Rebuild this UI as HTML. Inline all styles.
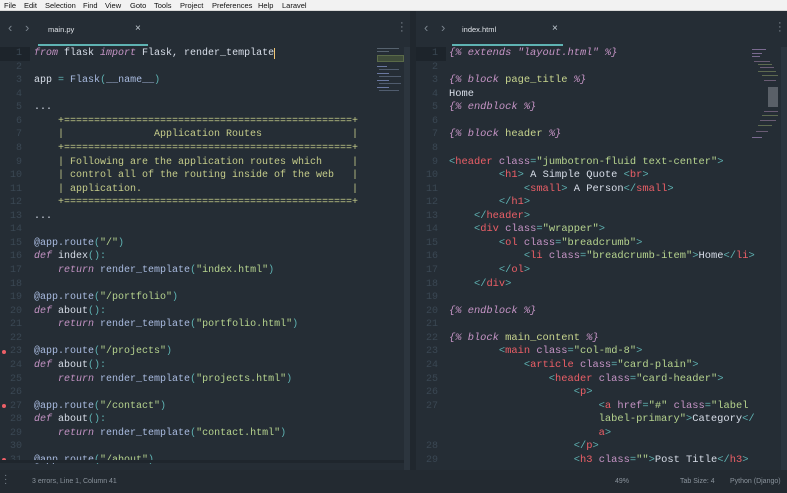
<!DOCTYPE html>
<html><head><meta charset="utf-8"><style>
*{margin:0;padding:0;box-sizing:border-box}
body{width:787px;height:493px;overflow:hidden;background:#252d35;font-family:"Liberation Sans",sans-serif;position:relative}
.menu{position:absolute;left:0;top:0;width:787px;height:11px;background:#f2f2f2;border-bottom:1px solid #d8d8d8;font-size:7.5px;color:#111}
.menu span{position:absolute;top:1px}
.pane{position:absolute;top:11px;bottom:23px;background:#252d35;overflow:hidden}
.tabbar{position:absolute;left:0;right:0;top:0;height:33px}
.tab{position:absolute;top:14px;font-size:7.5px;color:#dfe3e8}
.x{position:absolute;top:12px;font-size:10px;color:#c8d0d8}
.arr{position:absolute;top:9px;font-size:13px;color:#7a848e}
.dots{position:absolute;top:10px;font-size:11px;color:#8a939c;line-height:4px;width:3px}
.ul{position:absolute;top:33px;height:2px;background:#5fb3b3}
.code{position:absolute;top:36px;white-space:pre;line-height:13.57px}
.ln{position:absolute;top:36px;text-align:right;white-space:pre;line-height:13.57px;color:#3a4753}
.k{color:#c594c5;font-style:italic}.t{color:#ec5f67}.p{color:#5fb3b3}.s{color:#b6d38e}.a{color:#c594c5}
.d{color:#a9bbe0}.c{color:#c5cc8a}.w{color:#d8dee9}.j{color:#c594c5;font-style:italic}.g{color:#c9d68f}
.status{position:absolute;left:0;top:470px;width:787px;height:23px;background:#232a31;font-size:7px;color:#8a939c}
.status span{position:absolute;top:8px}
.dot{position:absolute;width:4px;height:4px;border-radius:2px;background:#ec5f67}
.m{position:absolute;height:1px}
</style></head><body>
<div class="menu">
<span style="left:4px">File</span><span style="left:24px">Edit</span><span style="left:45px">Selection</span><span style="left:83px">Find</span><span style="left:105px">View</span><span style="left:130px">Goto</span><span style="left:154px">Tools</span><span style="left:180px">Project</span><span style="left:212px">Preferences</span><span style="left:258px">Help</span><span style="left:282px">Laravel</span>
</div>

<div class="pane" style="left:0;width:410px">
<div class="tabbar"><span class="arr" style="left:8px">‹</span><span class="arr" style="left:25px">›</span><span class="tab" style="left:48px">main.py</span><span class="x" style="left:135px">×</span><span class="dots" style="left:400px">·<br>·<br>·</span></div>
<div class="ul" style="left:38px;width:110px"></div>
<div style="position:absolute;left:0;top:36px;width:30px;height:13.57px;background:#1d242b"></div>
<div class="ln" style="left:0;width:22px;font:10px 'Liberation Mono',monospace;line-height:13.57px">1
2
3
4
5
6
7
8
9
10
11
12
13
14
15
16
17
18
19
20
21
22
23
24
25
26
27
28
29
30
31</div>
<div class="code w" style="left:34px;font:10px 'Liberation Mono',monospace;line-height:13.57px"><span class="k">from</span> flask <span class="k">import</span> Flask, render_template<span style="border-left:1.5px solid #f0c674"></span>

app <span class="p">=</span> <span class="d">Flask</span><span class="p">(</span><span class="d">__name__</span><span class="p">)</span>

<span class="w">...</span>
<span class="c">    +================================================+
    |               Application Routes               |
    +================================================+
    | Following are the application routes which     |
    | control all of the routing inside of the web   |
    | application.                                   |
    +================================================+</span>
...

<span class="d">@app.route</span><span class="p">(</span><span class="s">"/"</span><span class="p">)</span>
<span class="k">def</span> index<span class="p">():</span>
    <span class="k">return</span> <span class="d">render_template</span><span class="p">(</span><span class="s">"index.html"</span><span class="p">)</span>

<span class="d">@app.route</span><span class="p">(</span><span class="s">"/portfolio"</span><span class="p">)</span>
<span class="k">def</span> about<span class="p">():</span>
    <span class="k">return</span> <span class="d">render_template</span><span class="p">(</span><span class="s">"portfolio.html"</span><span class="p">)</span>

<span class="d">@app.route</span><span class="p">(</span><span class="s">"/projects"</span><span class="p">)</span>
<span class="k">def</span> about<span class="p">():</span>
    <span class="k">return</span> <span class="d">render_template</span><span class="p">(</span><span class="s">"projects.html"</span><span class="p">)</span>

<span class="d">@app.route</span><span class="p">(</span><span class="s">"/contact"</span><span class="p">)</span>
<span class="k">def</span> about<span class="p">():</span>
    <span class="k">return</span> <span class="d">render_template</span><span class="p">(</span><span class="s">"contact.html"</span><span class="p">)</span>

<span class="d">@app.route</span><span class="p">(</span><span class="s">"/about"</span><span class="p">)</span></div>
<div class="dot" style="left:2px;top:339px"></div>
<div class="dot" style="left:2px;top:393px"></div>
<div class="dot" style="left:2px;top:447px"></div>
<div style="position:absolute;left:375px;top:35px;width:30px;height:45px">
<div class="m" style="left:2px;top:2px;width:22px;background:#56626e"></div>
<div class="m" style="left:2px;top:5px;width:12px;background:#56626e"></div>
<div style="position:absolute;left:2px;top:9px;width:27px;height:7px;background:#3f4c3a;border:1px solid #5a6a48"></div>
<div class="m" style="left:2px;top:20px;width:10px;background:#6a78a0"></div>
<div class="m" style="left:4px;top:23px;width:20px;background:#505c6e"></div>
<div class="m" style="left:2px;top:27px;width:12px;background:#6a78a0"></div>
<div class="m" style="left:4px;top:30px;width:22px;background:#505c6e"></div>
<div class="m" style="left:2px;top:34px;width:12px;background:#6a78a0"></div>
<div class="m" style="left:4px;top:37px;width:22px;background:#505c6e"></div>
<div class="m" style="left:2px;top:41px;width:12px;background:#6a78a0"></div>
<div class="m" style="left:4px;top:44px;width:20px;background:#505c6e"></div>
</div>
<div style="position:absolute;left:404px;top:36px;width:6px;bottom:0;background:#2c353e"></div>
<div style="position:absolute;left:0;top:449px;width:404px;height:3px;background:#1f262d"></div>
</div>

<div style="position:absolute;left:410px;top:11px;width:6px;bottom:23px;background:#20272e"></div>

<div class="pane" style="left:416px;width:371px">
<div class="tabbar"><span class="arr" style="left:8px">‹</span><span class="arr" style="left:25px">›</span><span class="tab" style="left:46px">index.html</span><span class="x" style="left:136px">×</span><span class="dots" style="left:362px">·<br>·<br>·</span></div>
<div class="ul" style="left:36px;width:111px"></div>
<div style="position:absolute;left:0;top:36px;width:30px;height:13.57px;background:#1d242b"></div>
<div class="ln" style="left:0;width:22px;font:10px 'Liberation Mono',monospace;line-height:13.57px">1
2
3
4
5
6
7
8
9
10
11
12
13
14
15
16
17
18
19
20
21
22
23
24
25
26
27


28
29</div>
<div class="code w" style="left:33px;font:10.4px 'Liberation Mono',monospace;line-height:13.57px"><span class="j">{% extends "layout.html" %}</span>

<span class="j">{% block</span> <span class="g">page_title</span> <span class="j">%}</span>
Home
<span class="j">{% endblock %}</span>

<span class="j">{% block</span> <span class="g">header</span> <span class="j">%}</span>

<span class="p">&lt;</span><span class="t">header</span> <span class="a">class</span><span class="p">=</span><span class="s">"jumbotron-fluid text-center"</span><span class="p">&gt;</span>
        <span class="p">&lt;</span><span class="t">h1</span><span class="p">&gt;</span> A Simple Quote <span class="p">&lt;</span><span class="t">br</span><span class="p">&gt;</span>
            <span class="p">&lt;</span><span class="t">small</span><span class="p">&gt;</span> A Person<span class="p">&lt;/</span><span class="t">small</span><span class="p">&gt;</span>
        <span class="p">&lt;/</span><span class="t">h1</span><span class="p">&gt;</span>
    <span class="p">&lt;/</span><span class="t">header</span><span class="p">&gt;</span>
    <span class="p">&lt;</span><span class="t">div</span> <span class="a">class</span><span class="p">=</span><span class="s">"wrapper"</span><span class="p">&gt;</span>
        <span class="p">&lt;</span><span class="t">ol</span> <span class="a">class</span><span class="p">=</span><span class="s">"breadcrumb"</span><span class="p">&gt;</span>
            <span class="p">&lt;</span><span class="t">li</span> <span class="a">class</span><span class="p">=</span><span class="s">"breadcrumb-item"</span><span class="p">&gt;</span>Home<span class="p">&lt;/</span><span class="t">li</span><span class="p">&gt;</span>
        <span class="p">&lt;/</span><span class="t">ol</span><span class="p">&gt;</span>
    <span class="p">&lt;/</span><span class="t">div</span><span class="p">&gt;</span>

<span class="j">{% endblock %}</span>

<span class="j">{% block</span> <span class="g">main_content</span> <span class="j">%}</span>
        <span class="p">&lt;</span><span class="t">main</span> <span class="a">class</span><span class="p">=</span><span class="s">"col-md-8"</span><span class="p">&gt;</span>
            <span class="p">&lt;</span><span class="t">article</span> <span class="a">class</span><span class="p">=</span><span class="s">"card-plain"</span><span class="p">&gt;</span>
                <span class="p">&lt;</span><span class="t">header</span> <span class="a">class</span><span class="p">=</span><span class="s">"card-header"</span><span class="p">&gt;</span>
                    <span class="p">&lt;</span><span class="t">p</span><span class="p">&gt;</span>
                        <span class="p">&lt;</span><span class="t">a</span> <span class="a">href</span><span class="p">=</span><span class="s">"#"</span> <span class="a">class</span><span class="p">=</span><span class="s">"label</span>
                        <span class="s">label-primary"</span><span class="p">&gt;</span>Category<span class="p">&lt;/</span>
                        <span class="t">a</span><span class="p">&gt;</span>
                    <span class="p">&lt;/</span><span class="t">p</span><span class="p">&gt;</span>
                    <span class="p">&lt;</span><span class="t">h3</span> <span class="a">class</span><span class="p">=</span><span class="s">""</span><span class="p">&gt;</span>Post Title<span class="p">&lt;/</span><span class="t">h3</span><span class="p">&gt;</span></div>
<div style="position:absolute;left:334px;top:36px;width:30px;height:100px">
<div class="m" style="left:2px;top:2px;width:14px;background:#7a6a90"></div>
<div class="m" style="left:2px;top:6px;width:10px;background:#7a6a90"></div>
<div class="m" style="left:2px;top:9px;width:8px;background:#7a6a90"></div>
<div class="m" style="left:4px;top:14px;width:16px;background:#6a5c74"></div>
<div class="m" style="left:8px;top:17px;width:14px;background:#5e6a50"></div>
<div class="m" style="left:10px;top:20px;width:14px;background:#6a5c74"></div>
<div class="m" style="left:8px;top:24px;width:18px;background:#5e6a50"></div>
<div class="m" style="left:12px;top:28px;width:16px;background:#5e6a50"></div>
<div class="m" style="left:14px;top:33px;width:12px;background:#6a5c74"></div>
<div style="position:absolute;left:18px;top:40px;width:10px;height:20px;background:#5a6068"></div>
<div class="m" style="left:14px;top:64px;width:14px;background:#6a5c74"></div>
<div class="m" style="left:12px;top:68px;width:16px;background:#5e6a50"></div>
<div class="m" style="left:10px;top:73px;width:16px;background:#6a5c74"></div>
<div class="m" style="left:8px;top:78px;width:14px;background:#5e6a50"></div>
<div class="m" style="left:6px;top:84px;width:12px;background:#6a5c74"></div>
<div class="m" style="left:2px;top:90px;width:10px;background:#7a6a90"></div>
</div>
<div style="position:absolute;left:365px;top:36px;width:6px;bottom:0;background:#2c353e"></div>
</div>

<div class="status">
<span style="left:4px;top:4px;font-size:10px;color:#7a848e;line-height:4px">·<br>·<br>·</span>
<span style="left:32px">3 errors, Line 1, Column 41</span>
<span style="left:615px">49%</span>
<span style="left:680px">Tab Size: 4</span>
<span style="left:730px">Python (Django)</span>
</div>
</body></html>
